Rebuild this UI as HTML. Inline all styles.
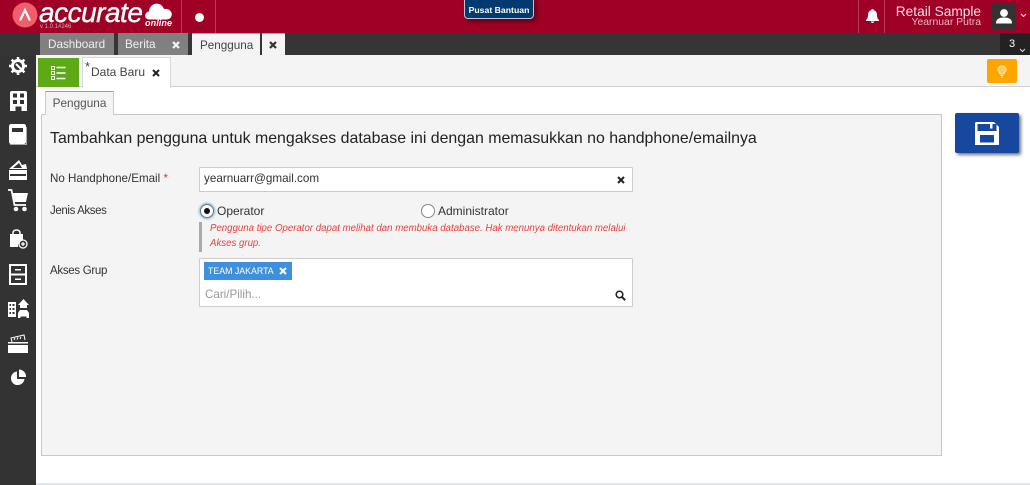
<!DOCTYPE html>
<html><head><meta charset="utf-8"><style>
html,body{margin:0;padding:0;width:1030px;height:485px;overflow:hidden;background:#fff;font-family:"Liberation Sans",sans-serif;color:#333}
.a{position:absolute;white-space:nowrap}
svg{position:absolute;overflow:visible}
</style></head><body>
<!-- top bar -->
<div class="a" style="left:0;top:0;width:1030px;height:33px;background:#a00026"></div>
<div class="a" style="left:181px;top:0;width:1px;height:33px;background:#b53a55"></div>
<div class="a" style="left:215px;top:0;width:1px;height:33px;background:#b53a55"></div>
<div class="a" style="left:858px;top:0;width:1px;height:33px;background:#b53a55"></div>
<div class="a" style="left:884px;top:0;width:1px;height:33px;background:#b53a55"></div>
<svg style="left:12px;top:2px" width="26" height="26" viewBox="0 0 26 26"><circle cx="13" cy="13" r="12.5" fill="#ee5f6b"/><path d="M8 18.500 13 8l5 10.500" fill="none" stroke="#fff" stroke-width="2.200"/></svg>
<div class="a" style="left:39px;top:-3px;font:italic 28px 'Liberation Sans',sans-serif;color:#fff;letter-spacing:-.5px;-webkit-text-stroke:.4px #fff">accurate</div>
<svg style="left:144px;top:2px" width="28" height="18" viewBox="0 0 28 18"><path d="M5 17.500C0 17.500 0 10 5 9.500 5.500 4 10 0.500 15 2 18 3 19 5 20 7 25 6 29 10 27.500 14 26.500 17 24 17.500 22 17.500Z" fill="#fff"/></svg>
<div class="a" style="left:145px;top:18px;font:italic bold 9px 'Liberation Sans',sans-serif;color:#fff;letter-spacing:.1px">online</div>
<div class="a" style="left:40px;top:24px;font:6px 'Liberation Sans',sans-serif;color:#e8a8b8">v 1.0.1#246</div>
<div class="a" style="left:195px;top:13px;width:9px;height:9px;border-radius:50%;background:#fff"></div>
<div class="a" style="left:464px;top:-4px;width:68px;height:21px;background:#003a70;border:1px solid #b8c8d8;border-radius:4px;box-shadow:3px 3px 5px rgba(60,0,15,.6);color:#fff;font:bold 8.700px/26px 'Liberation Sans',sans-serif;text-align:center">Pusat Bantuan</div>
<svg style="left:866px;top:9px" width="13" height="14" viewBox="0 0 13 14"><path d="M6.500 0C7.300 0 7.800.6 7.800 1.200 10 1.800 11 3.500 11 6c0 3 1 4 2 5.200v.8H0v-.8C1 10 2 9 2 6c0-2.500 1-4.200 3.200-4.800C5.200.6 5.700 0 6.500 0ZM4.800 12.500h3.400C8.200 13.500 7.400 14 6.500 14S4.800 13.500 4.800 12.500Z" fill="#fff"/></svg>
<div class="a" style="right:49px;top:4px;font:13.700px 'Liberation Sans',sans-serif;color:#f5dfe4">Retail Sample</div>
<div class="a" style="right:49px;top:17px;font:10.400px 'Liberation Sans',sans-serif;color:#e8b8c4">Yearnuar Putra</div>
<div class="a" style="left:991px;top:4px;width:25px;height:25px;background:#333"></div>
<svg style="left:995px;top:8px" width="17" height="17" viewBox="0 0 17 17"><circle cx="9" cy="5" r="3.900" fill="#fff"/><path d="M1 15.500C1 11 4 9.500 9 9.500S17 11 17 15.500Z" fill="#fff"/></svg>
<svg style="left:1020px;top:13px" width="7" height="5" viewBox="0 0 7 5"><path d="M1 1l2.500 2.500L6 1" fill="none" stroke="#fff" stroke-width="1"/></svg>
<!-- tab bar -->
<div class="a" style="left:0;top:33px;width:1030px;height:22px;background:#353535"></div>
<div class="a" style="left:1000px;top:33px;width:30px;height:22px;background:#222"></div>
<div class="a" style="left:1009px;top:38px;font:11px 'Liberation Sans',sans-serif;color:#fff">3</div>
<svg style="left:1019px;top:48px" width="7" height="5" viewBox="0 0 7 5"><path d="M1 1l2.500 2.500L6 1" fill="none" stroke="#ddd" stroke-width="1"/></svg>
<div class="a" style="left:40px;top:33px;width:74px;height:22px;background:#808080;color:#f0f0f0;font:11.700px/24px 'Liberation Sans',sans-serif;text-indent:8px">Dashboard</div>
<div class="a" style="left:118px;top:33px;width:70px;height:22px;background:#808080;color:#f0f0f0;font:11.700px/24px 'Liberation Sans',sans-serif;text-indent:7px">Berita</div>
<div class="a" style="left:192px;top:33px;width:68px;height:23px;background:#f4f4f4;border-top:1px solid #6cb4e4;box-sizing:border-box;color:#444;font:11.700px/23px 'Liberation Sans',sans-serif;text-indent:8px">Pengguna</div>
<div class="a" style="left:262px;top:33px;width:23px;height:23px;background:#f4f4f4;border-top:1px solid #6cb4e4;box-sizing:border-box"></div>
<svg style="left:172px;top:41px" width="8" height="8" viewBox="0 0 8 8"><path d="M1 1l6 6M7 1 1 7" stroke="#f4f4f4" stroke-width="2.200"/></svg>
<svg style="left:269px;top:41px" width="8" height="8" viewBox="0 0 8 8"><path d="M1 1l6 6M7 1 1 7" stroke="#333" stroke-width="2.200"/></svg>
<!-- sidebar -->
<div class="a" style="left:0;top:55px;width:36px;height:430px;background:#333"></div>
<!-- sub tab strip -->
<div class="a" style="left:36px;top:55px;width:994px;height:32px;background:#f4f4f4;border-bottom:1px solid #d0d0d0;box-sizing:border-box"></div>
<div class="a" style="left:38px;top:58px;width:41px;height:29px;background:#5eaa16"></div>
<svg style="left:51px;top:66px" width="15" height="14" viewBox="0 0 15 14"><g fill="none" stroke="#fff" stroke-width="1"><rect x=".5" y=".5" width="3" height="3"/><rect x=".5" y="5.500" width="3" height="3"/><rect x=".5" y="10.500" width="3" height="3"/></g><path d="M5.500 1.500h9M5.500 7h9M5.500 12.500h9" stroke="#fff" stroke-width="1.500"/></svg>
<div class="a" style="left:82px;top:57px;width:89px;height:31px;background:#fff;border:1px solid #d8d8d8;border-bottom:0;box-sizing:border-box"></div>
<div class="a" style="left:85px;top:59px;font:13px 'Liberation Sans',sans-serif;color:#444">*</div>
<div class="a" style="left:91px;top:65px;font:12px 'Liberation Sans',sans-serif;color:#444">Data Baru</div>
<svg style="left:152px;top:69px" width="8" height="8" viewBox="0 0 8 8"><path d="M1 1l6 6M7 1 1 7" stroke="#222" stroke-width="2"/></svg>
<div class="a" style="left:987px;top:59px;width:30px;height:24px;background:#ffa500;border-radius:2px"></div>
<svg style="left:997px;top:65px" width="10" height="13" viewBox="0 0 10 13"><path d="M3.300 9C2.800 7.500 1 7 1 4.500 1 2.300 2.800 1 5 1S9 2.300 9 4.500C9 7 7.200 7.500 6.700 9Z" fill="#ffc860" stroke="#ffe8c0" stroke-width="1"/><path d="M3.500 10.500h3M4 12h2" stroke="#ffe8c0" stroke-width="1"/></svg>
<!-- panel -->
<div class="a" style="left:45px;top:91px;width:69px;height:24px;background:#f4f4f4;border:1px solid #ccc;border-top:1px solid #5db0e6;box-sizing:border-box;color:#555;font:11.800px/23px 'Liberation Sans',sans-serif;text-align:center;z-index:2;border-bottom:0">Pengguna</div>
<div class="a" style="left:41px;top:114px;width:901px;height:342px;background:#f4f4f4;border:1px solid #c8c8c8;box-sizing:border-box"></div>
<div class="a" style="left:50px;top:130px;font:15.900px 'Liberation Sans',sans-serif;color:#222">Tambahkan pengguna untuk mengakses database ini dengan memasukkan no handphone/emailnya</div>
<div class="a" style="left:50px;top:172px;font:11.600px 'Liberation Sans',sans-serif;color:#333">No Handphone/Email <span style="color:#e33">*</span></div>
<div class="a" style="left:199px;top:167px;width:434px;height:25px;background:#fff;border:1px solid #ccc;box-sizing:border-box;border-radius:1px;font:11.700px/21px 'Liberation Sans',sans-serif;padding-left:4px;color:#333">yearnuarr@gmail.com</div>
<svg style="left:617px;top:176px" width="8" height="8" viewBox="0 0 8 8"><path d="M1 1l6 6M7 1 1 7" stroke="#222" stroke-width="2"/></svg>
<div class="a" style="left:50px;top:205px;font:11.500px 'Liberation Sans',sans-serif;color:#333;letter-spacing:-.38px">Jenis Akses</div>
<div class="a" style="left:200px;top:204px;width:14px;height:14px;border-radius:50%;background:#fff;border:1px solid #777;box-sizing:border-box;box-shadow:0 0 2px 1px #7fb4e0"></div>
<div class="a" style="left:204px;top:208px;width:6px;height:6px;border-radius:50%;background:#111"></div>
<div class="a" style="left:217px;top:204px;font:12px 'Liberation Sans',sans-serif;color:#333">Operator</div>
<div class="a" style="left:421px;top:204px;width:14px;height:14px;border-radius:50%;background:#fff;border:1px solid #888;box-sizing:border-box"></div>
<div class="a" style="left:438px;top:204px;font:12px 'Liberation Sans',sans-serif;color:#333">Administrator</div>
<div class="a" style="left:199px;top:222px;width:3px;height:30px;background:#aaa"></div>
<div class="a" style="left:210px;top:223px;font:italic 9.670px 'Liberation Sans',sans-serif;color:#e8403c">Pengguna tipe Operator dapat melihat dan membuka database. Hak menunya ditentukan melalui</div>
<div class="a" style="left:210px;top:238px;font:italic 9.670px 'Liberation Sans',sans-serif;color:#e8403c">Akses grup.</div>
<div class="a" style="left:50px;top:265px;font:11.500px 'Liberation Sans',sans-serif;color:#333;letter-spacing:-.3px">Akses Grup</div>
<div class="a" style="left:199px;top:258px;width:434px;height:49px;background:#fff;border:1px solid #ccc;box-sizing:border-box;border-radius:1px"></div>
<div class="a" style="left:204px;top:262px;width:88px;height:18px;background:#3f8fdf;color:#fff;font:8.800px/18px 'Liberation Sans',sans-serif;text-indent:4px">TEAM JAKARTA</div>
<svg style="left:279px;top:267px" width="8" height="8" viewBox="0 0 8 8"><path d="M1 1l6 6M7 1 1 7" stroke="#fff" stroke-width="2"/></svg>
<div class="a" style="left:205px;top:288px;font:11.600px 'Liberation Sans',sans-serif;color:#999">Cari/Pilih...</div>
<svg style="left:615px;top:290px" width="11" height="11" viewBox="0 0 11 11"><circle cx="4.500" cy="4.500" r="3.300" fill="none" stroke="#222" stroke-width="1.500"/><path d="M7 7l3.200 3.200" stroke="#222" stroke-width="2"/></svg>
<!-- save -->
<div class="a" style="left:955px;top:113px;width:64px;height:40px;background:#17479e;border-radius:2px;box-shadow:2px 2px 3px rgba(0,0,0,.55)"></div>
<svg style="left:975px;top:122px" width="24" height="23" viewBox="0 0 24 23"><path d="M1 0H19L24 5V23H0V1Z" fill="#fff"/><rect x="2.500" y="2" width="19" height="7" fill="#17479e"/><rect x="15" y="2" width="2.500" height="4.500" fill="#fff"/><rect x="5" y="13" width="14" height="7.500" fill="#17479e"/></svg>
<!-- sidebar icons -->
<svg style="left:9px;top:57px" width="18" height="18" viewBox="0 0 18 18"><circle cx="9" cy="9" r="5.500" fill="none" stroke="#fff" stroke-width="3"/><path d="M9 0v3M9 15v3M0 9h3M15 9h3M2.600 2.600l2.100 2.100M13.300 13.300l2.100 2.100M2.600 15.400l2.100-2.100M13.300 4.700l2.100-2.100" stroke="#fff" stroke-width="2.500"/><path d="M7 7l5 5" stroke="#fff" stroke-width="2"/></svg>
<svg style="left:10px;top:91px" width="17" height="20" viewBox="0 0 17 20"><path fill-rule="evenodd" d="M2 0H15Q17 0 17 2V20H11.500V15.500H5.500V20H0V2Q0 0 2 0ZM3 2.500V6.500H7V2.500ZM10 2.500V6.500H14V2.500ZM3 9V13H7V9ZM10 9V13H14V9Z" fill="#fff"/></svg>
<svg style="left:9px;top:124px" width="18" height="21" viewBox="0 0 18 21"><path fill-rule="evenodd" d="M2 0H15C16 0 17 1 17 2V18C17 19 16 20 15 20H2C1 20 0 19 0 18V2C0 1 1 0 2 0ZM3 4V8H14V4Z" fill="#fff"/><path d="M1 20.500H17.500V3" fill="none" stroke="#aaa" stroke-width="1"/></svg>
<svg style="left:9px;top:159px" width="18" height="22" viewBox="0 0 18 22"><path d="M0 10 10 1 13 6 17 5 18 10Z" fill="#fff"/><path d="M4 9 10 4l3 5Z" fill="#333"/><path d="M0 11H18V21H0Z" fill="#fff"/><rect x="1" y="15" width="16" height="2" fill="#333"/></svg>
<svg style="left:8px;top:188px" width="20" height="25" viewBox="0 0 20 25"><path d="M0 2H3.500L6.500 17H18" fill="none" stroke="#fff" stroke-width="1.800"/><path d="M4.500 5H20L18 14H6Z" fill="#fff"/><circle cx="8" cy="21" r="2.300" fill="#fff"/><circle cx="16.500" cy="21" r="2.300" fill="#fff"/></svg>
<svg style="left:9px;top:229px" width="19" height="20" viewBox="0 0 19 20"><path d="M4 7V4C4 2 5.500 1 7.500 1S11 2 11 4V7" fill="none" stroke="#fff" stroke-width="1.500"/><path d="M1 5H14V11A6 6 0 0 0 9 18H1Z" fill="#fff"/><circle cx="14" cy="15" r="4" fill="#333" stroke="#fff" stroke-width="1.300"/><path d="M12 15h4M14 13v4" stroke="#fff" stroke-width="1.300"/></svg>
<svg style="left:9px;top:264px" width="18" height="21" viewBox="0 0 18 21"><path fill-rule="evenodd" d="M0 0H18V21H0ZM2 2V9.500H16V2ZM2 11.500V19H16V11.500Z" fill="#fff"/><rect x="6" y="5" width="6" height="1.500" fill="#fff"/><rect x="6" y="14.500" width="6" height="1.500" fill="#fff"/></svg>
<svg style="left:8px;top:298px" width="21" height="21" viewBox="0 0 21 21"><path fill-rule="evenodd" d="M0 4H8V19H0ZM1.500 6V8H3V6ZM4.500 6V8H6.500V6ZM1.500 10V12H3V10ZM4.500 10V12H6.500V10ZM1.500 14V16H3V14ZM4.500 14V16H6.500V14Z" fill="#fff"/><path d="M10 7 15.500 1 21 7H19V10H12V7Z" fill="#fff"/><path d="M10 20V15L12 12H19L21 15V20H18.500V18.500H12.500V20Z" fill="#fff"/></svg>
<svg style="left:8px;top:335px" width="20" height="19" viewBox="0 0 20 19"><path d="M4 7 3 3 16 0 17 5" fill="none" stroke="#fff" stroke-width="1"/><path d="M6 5l1-2M9 4.500l1-2M12 4l1-2" stroke="#fff" stroke-width="1"/><rect x="0" y="7" width="20" height="1.500" fill="#fff"/><rect x="0" y="10" width="20" height="8" fill="#fff"/></svg>
<svg style="left:10px;top:369px" width="16" height="16" viewBox="0 0 16 16"><path d="M7 2.500A6.800 6.800 0 1 0 14.500 10H7Z" fill="#fff"/><path d="M9 0A7 7 0 0 1 16 7.500H9Z" fill="#fff" transform="translate(0 .5)"/></svg>
<!-- bottom line -->
<div class="a" style="left:36px;top:483px;width:994px;height:2px;background:#dfe8f0"></div>
</body></html>
